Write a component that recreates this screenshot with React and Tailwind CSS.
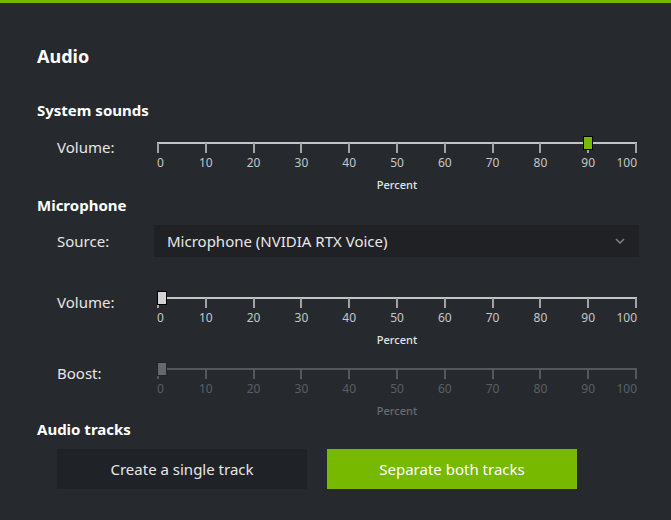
import React from 'react';

const ticks = [0, 10, 20, 30, 40, 50, 60, 70, 80, 90, 100];

const Slider = ({ value, disabled, thumbClass }) => {
    const trackW = 478;
    const thumbLeft = Math.max(0, 1 + (value / 100) * trackW - 5);
    return (
        <div className="w-[480px]">
            <div className="relative h-[14px]">
                <div className={`absolute left-0 right-0 top-[6px] h-[2px] ${disabled ? 'bg-[#54585d]' : 'bg-[#c4c4c4]'}`} />
                {ticks.map((t) => (
                    <div
                        key={t}
                        className={`absolute top-[7px] h-[10px] w-[2px] ${disabled ? 'bg-[#54585d]' : 'bg-[#a3a3a3]'}`}
                        style={{ left: `${(t / 100) * trackW}px` }}
                    />
                ))}
                <div
                    className={`absolute top-0 h-[14px] w-[10px] border ${thumbClass}`}
                    style={{ left: `${thumbLeft}px` }}
                />
            </div>
            <div className={`relative mt-[6px] h-[14px] text-[12px] leading-[14px] ${disabled ? 'text-[#5b5f64]' : 'text-[#c6c6c6]'}`}>
                {ticks.map((t) => {
                    const x = 1 + (t / 100) * trackW;
                    if (t === 0) return <span key={t} className="absolute left-0">{t}</span>;
                    if (t === 100) return <span key={t} className="absolute right-0">{t}</span>;
                    return (
                        <span key={t} className="absolute -translate-x-1/2" style={{ left: `${x}px` }}>{t}</span>
                    );
                })}
            </div>
            <div className={`mt-[8px] h-[14px] text-center text-[11px] leading-[14px] font-medium ${disabled ? 'text-[#686c71]' : 'text-[#e4e4e4]'}`}>
                Percent
            </div>
        </div>
    );
};

const Row = ({ label, children, mt }) => (
    <div className={`flex items-start pl-[20px] ${mt}`}>
        <div className="mt-[1px] w-[100px] h-[20px] text-[15px] leading-[20px] text-[#e6e6e6]">{label}</div>
        {children}
    </div>
);

const App = () => {
    return (
        <div
            className="w-[671px] h-[520px] overflow-hidden bg-[#262a2e] text-white"
            style={{ fontFamily: '"Noto Sans", "Liberation Sans", sans-serif' }}
        >
            <div className="h-[3px] bg-[#76b900]" />
            <div className="pl-[37px]">
                <h1 className="mt-[41px] h-[24px] text-[18px] leading-[24px] font-bold">Audio</h1>

                <h2 className="mt-[32px] h-[20px] text-[15px] leading-[20px] font-bold">System sounds</h2>
                <Row label="Volume:" mt="mt-[16px]">
                    <Slider value={90} thumbClass="border-black bg-[#76b900]" />
                </Row>

                <h2 className="mt-[3px] h-[20px] text-[15px] leading-[20px] font-bold">Microphone</h2>
                <div className="mt-[10px] flex items-center pl-[20px]">
                    <div className="w-[97px] text-[15px] leading-[20px] text-[#e6e6e6]">Source:</div>
                    <div className="flex h-[32px] w-[485px] items-center justify-between bg-[#1f2125] pl-[13px] pr-[14px]">
                        <span className="text-[15px] text-[#e8e8e8]">Microphone (NVIDIA RTX Voice)</span>
                        <svg width="10" height="6" viewBox="0 0 10 6" fill="none">
                            <polyline points="1,1 5,5 9,1" stroke="#7b7f84" strokeWidth="1.6" />
                        </svg>
                    </div>
                </div>

                <Row label="Volume:" mt="mt-[34px]">
                    <Slider value={0} thumbClass="border-black bg-[#d2d2d2]" />
                </Row>
                <Row label="Boost:" mt="mt-[15px]">
                    <Slider value={0} disabled thumbClass="border-[#222528] bg-[#65696e]" />
                </Row>

                <h2 className="mt-[1px] h-[20px] text-[15px] leading-[20px] font-bold">Audio tracks</h2>
                <div className="mt-[10px] flex gap-[20px] pl-[20px]">
                    <button className="h-[40px] w-[250px] bg-[#1f2226] text-[15px] text-[#e8e8e8]">
                        Create a single track
                    </button>
                    <button className="h-[40px] w-[250px] bg-[#76b900] text-[15px] text-white">
                        Separate both tracks
                    </button>
                </div>
            </div>
        </div>
    );
};

export default App;
